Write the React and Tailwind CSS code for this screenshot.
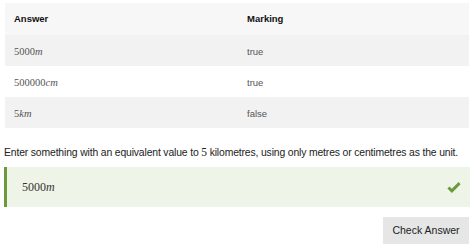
import React from 'react';

const rows = [
  { answer: '5000', unit: 'm', marking: 'true' },
  { answer: '500000', unit: 'cm', marking: 'true' },
  { answer: '5', unit: 'km', marking: 'false' },
];

function MathValue({ num, unit, className = '' }) {
  return (
    <span className={`font-['Liberation_Serif',serif] ${className}`}>
      {num}
      <i>{unit}</i>
    </span>
  );
}

export default function App() {
  return (
    <div className="w-[474px] h-[247px] bg-white font-['Liberation_Sans',Arial,sans-serif] text-[#222] overflow-hidden">
      <div className="pl-[5px] pr-[5px] pt-[3px]">
        <table className="w-full border-collapse text-[9.5px]">
          <thead>
            <tr className="bg-[#f7f7f7] h-[32px]">
              <th className="text-left font-bold pl-[9px] w-[232px] text-[#111]">Answer</th>
              <th className="text-left font-bold pl-[10px] text-[#111]">Marking</th>
            </tr>
          </thead>
          <tbody>
            {rows.map((r, i) => (
              <tr key={i} className={`h-[31px] ${i % 2 === 0 ? 'bg-[#f2f2f2]' : 'bg-white'}`}>
                <td className="pl-[9px] pt-[3px] text-[#555]">
                  <MathValue num={r.answer} unit={r.unit} className="text-[10.5px]" />
                </td>
                <td className="pl-[10px] pt-[3px] text-[#555]">{r.marking}</td>
              </tr>
            ))}
          </tbody>
        </table>
      </div>

      <p className="mt-[17px] pl-[4px] text-[10.4px] tracking-[-0.15px] leading-[14px] text-[#222] whitespace-nowrap">
        Enter something with an equivalent value to <span className="font-['Liberation_Serif',serif] text-[11.5px]">5</span> kilometres, using only metres or centimetres as the unit.
      </p>

      <div className="mt-[7px] mx-[4px] h-[40px] flex items-center justify-between bg-[#eef5e8] border-l-[3px] border-[#6b9a3c] pl-[15px] pr-[9px]">
        <MathValue num="5000" unit="m" className="text-[12px] text-[#333]" />
        <svg width="14" height="12" viewBox="0 0 16 14">
          <path d="M1.5 7.5 L5.5 11.5 L14.5 2.5" fill="none" stroke="#6b9a3c" strokeWidth="3.4" />
        </svg>
      </div>

      <div className="flex justify-end mt-[10px] pr-[5px]">
        <button className="h-[27px] w-[86px] bg-[#e6e6e6] text-[10.5px] text-[#222]">Check Answer</button>
      </div>
    </div>
  );
}
